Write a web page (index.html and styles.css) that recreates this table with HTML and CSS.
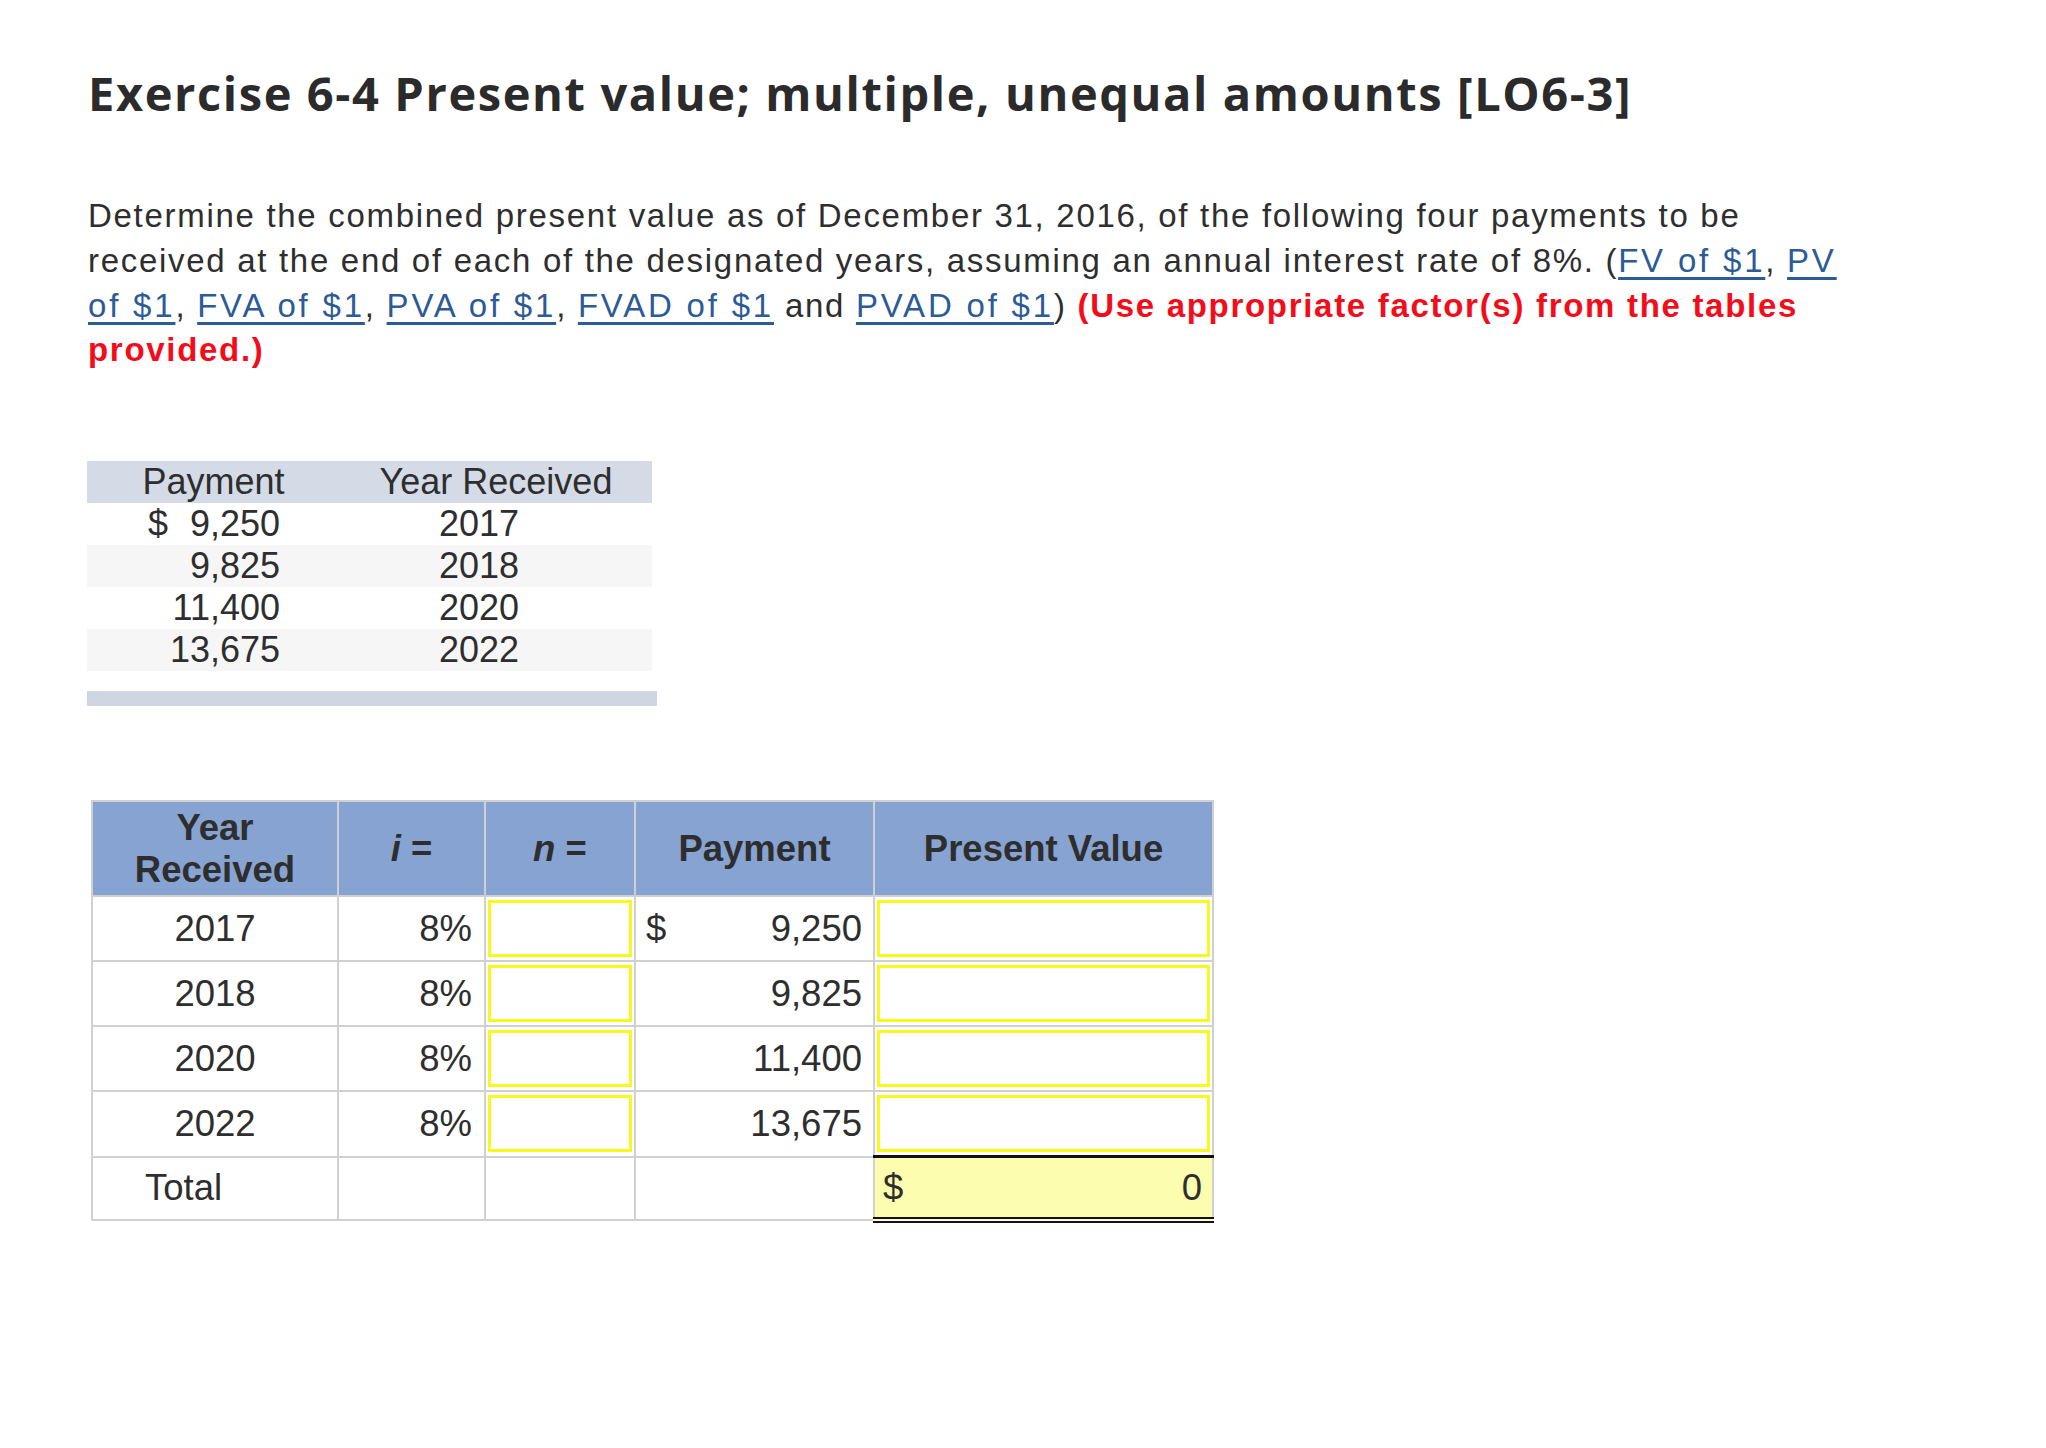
FILE: index.html
```html
<!DOCTYPE html>
<html lang="en">
<head>
<meta charset="utf-8">
<title>Exercise 6-4</title>
<link rel="stylesheet" href="styles.css">
</head>
<body>
<div class="page">
  <h1 class="title">Exercise 6-4 Present value; multiple, unequal amounts [LO6-3]</h1>
  <p class="prompt">Determine the combined present value as of December 31, 2016, of the following four payments to be received at the end of each of the designated years, assuming an annual interest rate of 8%. (<a href="#">FV of $1</a>, <a href="#">PV of $1</a>, <a href="#">FVA of $1</a>, <a href="#">PVA of $1</a>, <a href="#">FVAD of $1</a> and <a href="#">PVAD of $1</a>) <span class="warn">(Use appropriate factor(s) from the tables provided.)</span></p>

  <div class="given">
    <table class="given-table">
      <thead>
        <tr><th class="g-pay">Payment</th><th class="g-year">Year Received</th></tr>
      </thead>
      <tbody>
        <tr><td class="g-pay"><span class="cur">$</span>9,250</td><td class="g-year">2017</td></tr>
        <tr class="alt"><td class="g-pay">9,825</td><td class="g-year">2018</td></tr>
        <tr><td class="g-pay">11,400</td><td class="g-year">2020</td></tr>
        <tr class="alt"><td class="g-pay">13,675</td><td class="g-year">2022</td></tr>
      </tbody>
    </table>
    <div class="given-bar"></div>
  </div>

  <table class="pv">
    <colgroup>
      <col class="w-year"><col class="w-i"><col class="w-n"><col class="w-pay"><col class="w-pv">
    </colgroup>
    <thead>
      <tr>
        <th>Year<br>Received</th>
        <th><i>i</i> =</th>
        <th><i>n</i> =</th>
        <th>Payment</th>
        <th>Present Value</th>
      </tr>
    </thead>
    <tbody>
      <tr>
        <td class="ctr">2017</td><td class="rt">8%</td>
        <td class="inp"><div class="box"></div></td>
        <td class="amt"><span class="cur">$</span>9,250</td>
        <td class="inp"><div class="box"></div></td>
      </tr>
      <tr>
        <td class="ctr">2018</td><td class="rt">8%</td>
        <td class="inp"><div class="box"></div></td>
        <td class="amt">9,825</td>
        <td class="inp"><div class="box"></div></td>
      </tr>
      <tr>
        <td class="ctr">2020</td><td class="rt">8%</td>
        <td class="inp"><div class="box"></div></td>
        <td class="amt">11,400</td>
        <td class="inp"><div class="box"></div></td>
      </tr>
      <tr>
        <td class="ctr">2022</td><td class="rt">8%</td>
        <td class="inp"><div class="box"></div></td>
        <td class="amt">13,675</td>
        <td class="inp"><div class="box"></div></td>
      </tr>
      <tr class="total-row">
        <td class="lbl">Total</td><td></td><td></td><td></td>
        <td class="total"><span class="cur">$</span>0</td>
      </tr>
    </tbody>
  </table>
</div>
</body>
</html>
```
FILE: styles.css
```css
html, body {
  margin: 0;
  padding: 0;
  background: #ffffff;
}

body {
  font-family: "Liberation Sans", Arial, sans-serif;
  color: #2e2e2e;
}

.page {
  padding: 64px 0 0 88px;
}

.title {
  margin: 0;
  font-family: "Open Sans", Lato, "Liberation Sans", sans-serif;
  font-weight: 700;
  font-size: 47px;
  line-height: 58px;
  letter-spacing: 1.6px;
  color: #2b2b2b;
}

.prompt {
  margin: 72px 0 0 0;
  width: 1760px;
  font-size: 33px;
  line-height: 44.8px;
  letter-spacing: 1.7px;
  color: #2e2e2e;
}

.prompt a {
  color: #2c5b95;
  text-decoration: underline;
  text-underline-offset: 5px;
  letter-spacing: 2.8px;
}

.warn {
  color: #f20d1b;
  font-weight: 700;
}

/* given data table */
.given {
  margin: 88px 0 0 -1px;
  width: 570px;
}

.given-table {
  border-collapse: collapse;
  width: 565px;
  font-size: 36px;
}

.given-table th,
.given-table td {
  height: 42px;
  padding: 0;
  line-height: 42px;
  font-weight: 400;
  color: #2e2e2e;
}

.given-table thead tr {
  background: #d4dbe6;
}

.given-table .alt {
  background: #f6f6f6;
}

.given-table th.g-pay {
  width: 253px;
  text-align: center;
}

.given-table td.g-pay {
  text-align: right;
  padding-right: 60px;
}

.given-table td.g-pay .cur {
  float: left;
  padding-left: 61px;
}

.given-table th.g-year {
  text-align: center;
}

.given-table td.g-year {
  text-align: center;
  padding-right: 34px;
}

.given-bar {
  margin-top: 20px;
  height: 15px;
  background: #cfd6e1;
}

/* present value worksheet */
.pv {
  margin: 94px 0 0 3px;
  border-collapse: collapse;
  table-layout: fixed;
  width: 1121px;
  font-size: 36.5px;
}

.w-year { width: 246px; }
.w-i { width: 147px; }
.w-n { width: 150px; }
.w-pay { width: 239px; }
.w-pv { width: 339px; }

.pv th,
.pv td {
  border: 2px solid #d0d0d0;
  padding: 0;
  color: #2e2e2e;
}

.pv th {
  height: 93px;
  background: #87a3d2;
  font-weight: 700;
  line-height: 42px;
  text-align: center;
}

.pv td {
  height: 59px;
  line-height: 40px;
}

.pv .ctr {
  text-align: center;
}

.pv .rt {
  text-align: right;
  padding-right: 12px;
}

.pv .amt {
  text-align: right;
  padding: 0 11px 0 10px;
}

.pv .amt .cur {
  float: left;
}

.pv .inp {
  padding: 2px;
}

.pv .box {
  height: 51px;
  border: 3px solid #f9f81c;
  background: #ffffff;
}

.pv .lbl {
  text-align: left;
  padding-left: 52px;
}

.pv .total {
  background: #fdfdb0;
  border-top: 3px solid #111111;
  border-bottom: 6px double #111111;
  text-align: right;
  padding: 0 10px 0 8px;
}

.pv .total .cur {
  float: left;
}
```
